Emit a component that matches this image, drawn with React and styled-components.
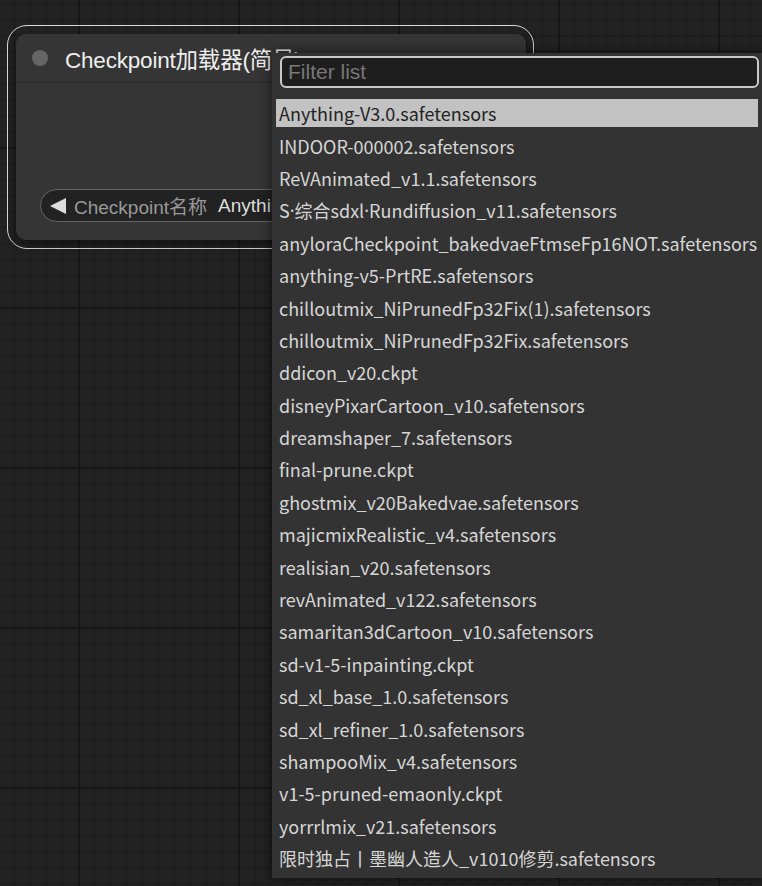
import React, { useState } from 'react';
import styled, { createGlobalStyle } from 'styled-components';

// --- Global / canvas ---

const GlobalStyle = createGlobalStyle`
  html, body {
    margin: 0;
    padding: 0;
    height: 100%;
  }
  body {
    background-color: #222222;
    overflow: hidden;
  }
`;

const Canvas = styled.div`
  position: relative;
  width: 762px;
  height: 886px;
  overflow: hidden;
  background-color: #222222;
  background-image:
    linear-gradient(to right, #171717 2px, transparent 2px),
    linear-gradient(to bottom, #171717 2px, transparent 2px),
    linear-gradient(to right, #1b1b1b 1px, transparent 1px),
    linear-gradient(to bottom, #1b1b1b 1px, transparent 1px);
  background-size: 160px 160px, 160px 160px, 16px 16px, 16px 16px;
  background-position: 78px 0, 0 147px, 14px 0, 0 3px;
`;

// --- Node ---

const NodeFrame = styled.div`
  position: absolute;
  left: 7px;
  top: 25px;
  padding: 8px 7px 8px 8px;
  border: 1.5px solid #d8d8d8;
  border-radius: 20px;
`;

const Node = styled.div`
  width: 510px;
  height: 206px;
  display: flex;
  flex-direction: column;
  background: #353535;
  border-radius: 10px;
  box-shadow: 0 4px 10px rgba(0, 0, 0, 0.45);
  overflow: hidden;
`;

const TitleBar = styled.div`
  height: 48px;
  flex-shrink: 0;
  display: flex;
  align-items: center;
  gap: 17px;
  padding-left: 16px;
  border-bottom: 1px solid #2b2b2b;
  background: #353535;
`;

const Dot = styled.span`
  width: 16px;
  height: 16px;
  border-radius: 50%;
  background: #666666;
`;

const Title = styled.span`
  font-family: "Liberation Sans", "Noto Sans CJK SC", sans-serif;
  font-size: 22.5px;
  color: #eeeeee;
  white-space: nowrap;
  letter-spacing: -0.2px;
`;

const NodeBody = styled.div`
  flex: 1;
  display: flex;
  flex-direction: column;
  justify-content: flex-end;
  padding: 0 24px 18px 24px;
`;

const ComboWidget = styled.div`
  height: 31px;
  display: flex;
  align-items: center;
  gap: 7px;
  padding-left: 9px;
  background: #222222;
  border: 1px solid #666666;
  border-radius: 17px;
  font-family: "Liberation Sans", "Noto Sans CJK SC", sans-serif;
  font-size: 19px;
  white-space: nowrap;
`;

const WidgetLabel = styled.span`
  color: #999999;
`;

const WidgetValue = styled.span`
  color: #dddddd;
  margin-left: 4px;
`;

const ArrowLeft = () => (
  <svg width="17" height="16" viewBox="0 0 17 16">
    <polygon points="16,0 16,16 0,8" fill="#dddddd" />
  </svg>
);

// --- Context menu ---

const Menu = styled.div`
  position: absolute;
  left: 272px;
  top: 53px;
  right: 0;
  display: flex;
  flex-direction: column;
  padding: 3px 2px 4px 2px;
  background: #333333;
  box-shadow: 0 0 12px rgba(0, 0, 0, 0.6);
`;

const FilterInput = styled.input`
  display: block;
  box-sizing: border-box;
  width: calc(100% - 7px);
  height: 32px;
  margin: 0 0 9px 6px;
  padding: 0 6px;
  background: #1e1e1e;
  border: 2px solid #c8c8c8;
  border-radius: 6px;
  outline: none;
  font-family: "Liberation Sans", sans-serif;
  font-size: 21px;
  color: #dddddd;

  &::placeholder {
    color: #777777;
  }
`;

const MenuEntry = styled.div`
  height: 28.4px;
  margin: 2px;
  padding-left: 3px;
  display: flex;
  align-items: center;
  font-family: "Noto Sans CJK SC", "Noto Sans", sans-serif;
  font-size: 18px;
  white-space: nowrap;
  color: ${({ $active }) => ($active ? '#222222' : '#d6d6d6')};
  background: ${({ $active }) => ($active ? '#c2c2c2' : 'transparent')};
  cursor: pointer;
`;

// narrow latin middle dot instead of the CJK full-width one
const Dot2 = styled.span`
  font-family: "Noto Sans", sans-serif;
`;

const models = [
  'Anything-V3.0.safetensors',
  'INDOOR-000002.safetensors',
  'ReVAnimated_v1.1.safetensors',
  'S·综合sdxl·Rundiffusion_v11.safetensors',
  'anyloraCheckpoint_bakedvaeFtmseFp16NOT.safetensors',
  'anything-v5-PrtRE.safetensors',
  'chilloutmix_NiPrunedFp32Fix(1).safetensors',
  'chilloutmix_NiPrunedFp32Fix.safetensors',
  'ddicon_v20.ckpt',
  'disneyPixarCartoon_v10.safetensors',
  'dreamshaper_7.safetensors',
  'final-prune.ckpt',
  'ghostmix_v20Bakedvae.safetensors',
  'majicmixRealistic_v4.safetensors',
  'realisian_v20.safetensors',
  'revAnimated_v122.safetensors',
  'samaritan3dCartoon_v10.safetensors',
  'sd-v1-5-inpainting.ckpt',
  'sd_xl_base_1.0.safetensors',
  'sd_xl_refiner_1.0.safetensors',
  'shampooMix_v4.safetensors',
  'v1-5-pruned-emaonly.ckpt',
  'yorrrlmix_v21.safetensors',
  '限时独占丨墨幽人造人_v1010修剪.safetensors',
];

const renderName = (name) =>
  name.split('·').flatMap((part, i) =>
    i === 0 ? [part] : [<Dot2 key={i}>·</Dot2>, part]
  );

const App = () => {
  const [filter, setFilter] = useState('');
  const [selected] = useState(0);

  const shown = models.filter((m) => m.toLowerCase().includes(filter.toLowerCase()));

  return (
    <>
      <GlobalStyle />
      <Canvas>
        <NodeFrame>
          <Node>
            <TitleBar>
              <Dot />
              <Title>Checkpoint加载器(简易)</Title>
            </TitleBar>
            <NodeBody>
              <ComboWidget>
                <ArrowLeft />
                <WidgetLabel>Checkpoint名称</WidgetLabel>
                <WidgetValue>{models[selected]}</WidgetValue>
              </ComboWidget>
            </NodeBody>
          </Node>
        </NodeFrame>

        <Menu>
          <FilterInput
            placeholder="Filter list"
            value={filter}
            onChange={(e) => setFilter(e.target.value)}
          />
          {shown.map((m, i) => (
            <MenuEntry key={m} $active={i === 0}>{renderName(m)}</MenuEntry>
          ))}
        </Menu>
      </Canvas>
    </>
  );
};

export default App;
